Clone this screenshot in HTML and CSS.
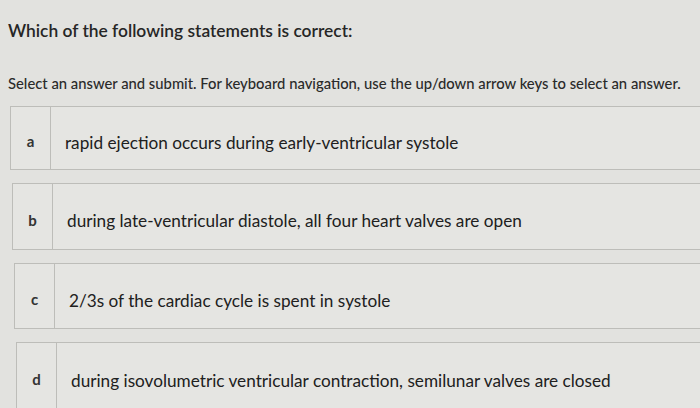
FILE: index.html
```html
<!DOCTYPE html>
<html>
<head>
<meta charset="utf-8">
<link rel="stylesheet" href="styles.css">
</head>
<body>
<main class="page">
  <h1 class="question">Which of the following statements is correct:</h1>
  <p class="instructions">Select an answer and submit. For keyboard navigation, use the up/down arrow keys to select an answer.</p>
  <ul class="options">
    <li class="option opt-a"><span class="letter">a</span><span class="text">rapid ejection occurs during early-ventricular systole</span></li>
    <li class="option opt-b"><span class="letter">b</span><span class="text">during late-ventricular diastole, all four heart valves are open</span></li>
    <li class="option opt-c"><span class="letter">c</span><span class="text">2/3s of the cardiac cycle is spent in systole</span></li>
    <li class="option opt-d"><span class="letter">d</span><span class="text">during isovolumetric ventricular contraction, semilunar valves are closed</span></li>
  </ul>
</main>
</body>
</html>
```

FILE: styles.css
```css
html, body {
  margin: 0;
  padding: 0;
  background: #e2e2df;
}
body {
  font-family: "Source Sans Pro", "Lato", "Noto Sans", sans-serif;
  color: #262626;
  overflow: hidden;
  width: 700px;
  height: 408px;
}
.page {
  padding: 19px 0 0 8px;
}
.question {
  margin: 0;
  font-size: 17.4px;
  font-weight: 600;
  line-height: 24px;
  letter-spacing: 0;
}
.instructions {
  margin: 31px 0 0;
  font-size: 14.8px;
  font-weight: 500;
  line-height: 18px;
  letter-spacing: 0;
  color: #2a2a2a;
}
.options {
  list-style: none;
  margin: 14px 0 0;
  padding: 0;
  display: flex;
  flex-direction: column;
  gap: 13px;
}
.option {
  display: flex;
  height: 62px;
  border: 1px solid #bdbdb9;
  border-right: none;
  margin-right: -20px;
  background: #e5e5e2;
}
.opt-a { margin-left: 2px; }
.opt-b { margin-left: 4px; height: 65px; }
.opt-c { margin-left: 6px; height: 64px; }
.opt-d { margin-left: 8px; height: 66px; }
.letter {
  width: 39px;
  flex: none;
  display: flex;
  align-items: center;
  justify-content: center;
  padding-top: 6px;
  border-right: 1px solid #bdbdb9;
  font-size: 15px;
  font-weight: 700;
  color: #333;
}
.text {
  display: flex;
  align-items: center;
  padding-left: 14px;
  padding-top: 8px;
  font-size: 17.2px;
  font-weight: 400;
  letter-spacing: 0;
  color: #202020;
}
```
